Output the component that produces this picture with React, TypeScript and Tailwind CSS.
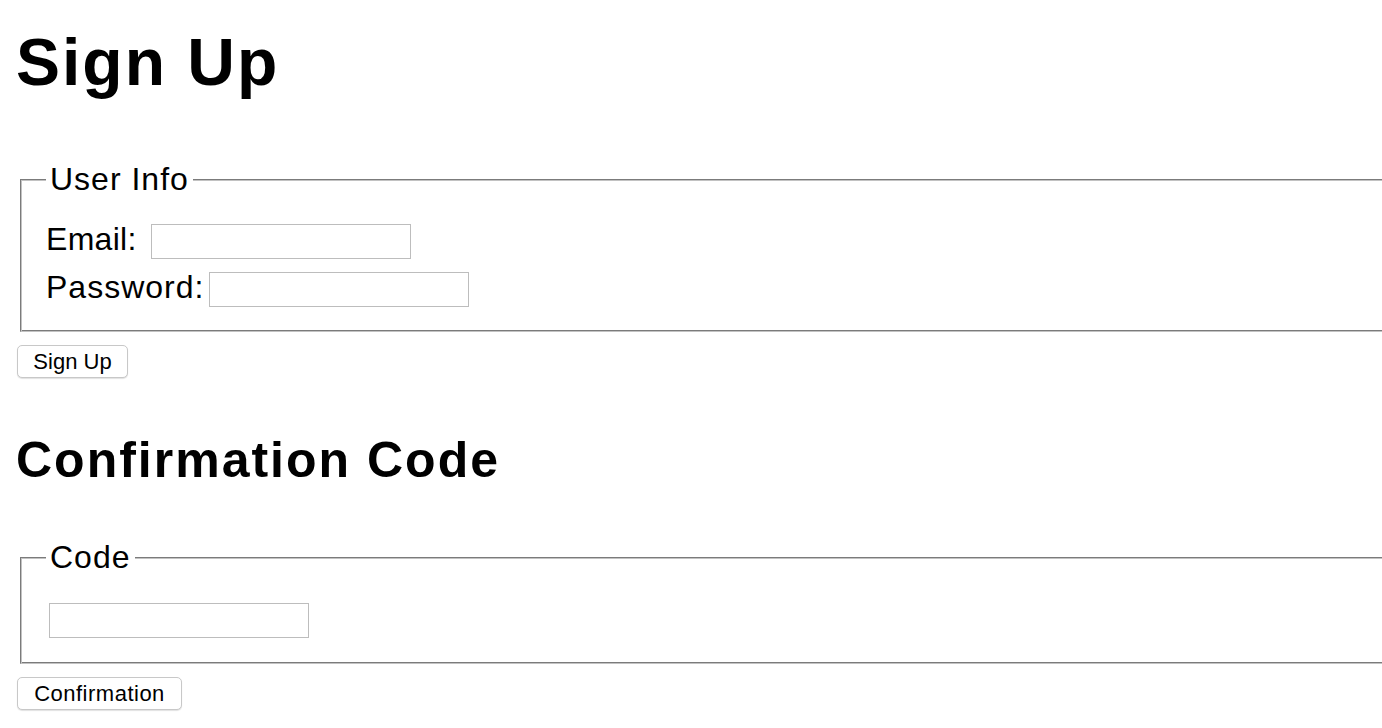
export default function App() {
  return (
    <div className="min-h-screen w-full overflow-hidden bg-white px-[16px] pt-[24px] font-['Liberation_Sans',Arial,sans-serif] text-black">
      {/* Sign up */}
      <h1 className="text-[66px] font-bold leading-[76px] tracking-[2px]">Sign Up</h1>

      <fieldset className="ml-[4px] mt-[61px] w-[1400px] border border-t-[#7b7b7b] border-l-[#7b7b7b] border-b-[#c2c2c2] border-r-[#c2c2c2] px-[25px] pb-[18px] pt-[20px] shadow-[inset_1px_1px_0_#c2c2c2,inset_-1px_-1px_0_#7b7b7b]">
        <legend className="bg-white px-[4px] text-[32px] leading-[36px] tracking-[1px]">User Info</legend>
        <div className="flex h-[48px] items-center">
          <span className="mb-[4px] w-[105px] text-[32px] leading-[36px] tracking-[0.3px]">Email:</span>
          <input type="text" className="h-[35px] w-[260px] border border-[#bdbdbd] bg-white outline-none" />
        </div>
        <div className="flex h-[48px] items-center">
          <span className="mb-[4px] w-[163px] text-[32px] leading-[36px] tracking-[1px]">Password:</span>
          <input type="password" className="h-[35px] w-[260px] border border-[#bdbdbd] bg-white outline-none" />
        </div>
      </fieldset>

      <button className="ml-[1px] mt-[13px] inline-flex h-[33px] w-[111px] items-center justify-center rounded-[5px] border border-[#c8c8c8] bg-white text-[22px] leading-none shadow-[0_1px_1px_rgba(0,0,0,0.12)]">
        Sign Up
      </button>

      {/* Confirmation */}
      <h2 className="mt-[53px] text-[50px] font-bold leading-[58px] tracking-[2px]">Confirmation Code</h2>

      <fieldset className="ml-[4px] mt-[50px] w-[1400px] border border-t-[#7b7b7b] border-l-[#7b7b7b] border-b-[#c2c2c2] border-r-[#c2c2c2] px-[25px] pb-[19px] pt-[21px] shadow-[inset_1px_1px_0_#c2c2c2,inset_-1px_-1px_0_#7b7b7b]">
        <legend className="bg-white px-[4px] text-[32px] leading-[36px] tracking-[1px]">Code</legend>
        <div className="flex h-[48px] items-center">
          <input type="text" className="ml-[3px] h-[35px] w-[260px] border border-[#bdbdbd] bg-white outline-none" />
        </div>
      </fieldset>

      <button className="ml-[1px] mt-[13px] inline-flex h-[33px] w-[165px] items-center justify-center rounded-[5px] border border-[#c8c8c8] bg-white text-[22px] leading-none tracking-[0.5px] shadow-[0_1px_1px_rgba(0,0,0,0.12)]">
        Confirmation
      </button>
    </div>
  );
}
